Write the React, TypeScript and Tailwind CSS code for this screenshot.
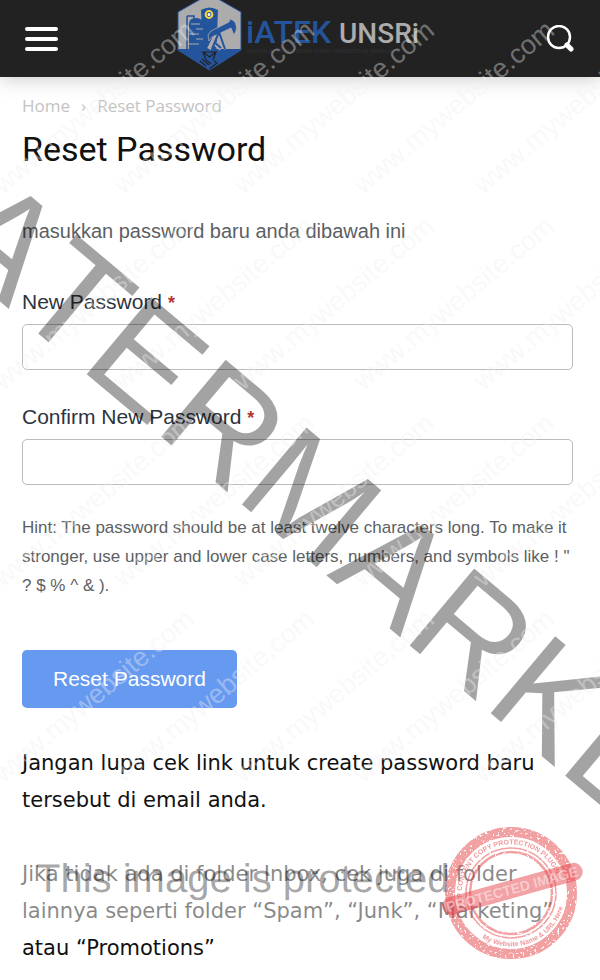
const columns = [3, 123, 243, 363, 483];
const rows = [195, 391, 588, 784];

function Logo() {
  return (
    <svg className="h-[77px] w-[256px]" viewBox="174 0 256 77" role="img" aria-label="IATEK UNSRI">
      <path d="M178 12 L209.500 -6 L241 12 V50 L209.500 70 L178 50Z" fill="#acacac" stroke="#24549c" strokeWidth="1" />
      <path d="M178 49 H241 V50 L209.500 70 L178 50Z" fill="#24549c" />
      <path d="M201 10 Q209.500 5 218 10 L216.500 49 H203Z" fill="#24549c" />
      <path d="M187 16 H194 V20 M187 16 V49" fill="none" stroke="#24549c" strokeWidth="1.500" />
      <path d="M189 49 V24 Q189 18 196 18 Q203 18 203 24 V49Z" fill="#24549c" />
      <path d="M191 24 H200 M196 29 H203 M189 34 H199 M196 39 H203 M189 44 H199" stroke="#acacac" strokeWidth="1.200" />
      <path d="M218 31 L209 49 M219 31 L226 49 M213 42 L221 49" stroke="#acacac" strokeWidth="4" />
      <path d="M208 35 L211 31 L229 22 L230 19 Q238 21 236 31 L234 35 L231 28 L212 37 L209 41Z" fill="#24549c" stroke="#acacac" strokeWidth="0.800" />
      <path d="M219 32 L212 49 M219 32 L225 49 M214 42 L221 48" stroke="#24549c" strokeWidth="2" />
      <circle cx="209" cy="14.500" r="3.400" fill="#24549c" stroke="#f1d83c" strokeWidth="2" />
      <circle cx="209" cy="14.500" r="1.500" fill="#fff" />
      <path d="M203 52 H216 L209.500 57Z M203 52 L206 60 L211 64 M216 52 L213 60 M200 61 L206 66 M202 59 L209 65 M214 61 L217 63 L209.500 69" fill="none" stroke="#222" strokeWidth="1.200" />
      <text x="246" y="43" fill="#24549c" className="font-[Roboto,sans-serif] text-[32px] font-medium">iATEK</text>
      <text x="339" y="43" fill="#acacac" className="font-[Roboto,sans-serif] text-[28px] font-medium">UNSRi</text>
      <text x="247" y="53" fill="#303238" className="font-[Roboto,sans-serif] text-[6px]">IKATAN ALUMNI TEKNIK KIMIA UNIVERSITAS SRIWIJAYA</text>
    </svg>
  );
}

function Stamp() {
  return (
    <svg className="pointer-events-none absolute left-[436px] top-[816px] h-[154px] w-[154px] [text-rendering:geometricPrecision]" viewBox="436 816 154 154" aria-label="Protected image">
      <defs>
        <filter id="grit" x="-10%" y="-10%" width="120%" height="120%">
          <feTurbulence type="fractalNoise" baseFrequency="0.400" numOctaves="2" seed="4" result="noise" />
          <feColorMatrix in="noise" type="matrix" values="0 0 0 0 0  0 0 0 0 0  0 0 0 0 0  12 0 0 0 -3.500" result="specks" />
          <feComposite in="SourceGraphic" in2="specks" operator="in" />
        </filter>
        <path id="stampTop" d="M463 904 A49 49 0 1 1 559 883" />
        <path id="stampBottom" d="M482 938 A54 54 0 0 0 565 890" />
      </defs>
      <g fill="none" stroke="#e6444a" opacity="0.500">
        <circle cx="511" cy="893" r="61" strokeWidth="10" filter="url(#grit)" />
        <circle cx="511" cy="893" r="45" strokeWidth="1.500" filter="url(#grit)" />
        <circle cx="511" cy="893" r="41" strokeWidth="2.500" filter="url(#grit)" />
      </g>
      <g fill="#e6444a" opacity="0.550" className="font-['Liberation_Sans',Arial,sans-serif] font-bold">
        <text className="text-[7px]"><textPath href="#stampTop">WP CONTENT COPY PROTECTION PLUGIN</textPath></text>
        <text className="text-[7px]"><textPath href="#stampBottom">My Website Name &amp; URL Here</textPath></text>
      </g>
      <g transform="rotate(-15.500 512 889)">
        <rect x="440" y="880" width="145" height="18" rx="9" fill="#e6444a" opacity="0.500" />
        <text x="512" y="894" textAnchor="middle" fill="#fff" opacity="0.450" className="font-['Liberation_Sans',Arial,sans-serif] text-[14px] font-bold">PROTECTED IMAGE</text>
      </g>
    </svg>
  );
}

function Watermarks() {
  return (
    <div className="pointer-events-none absolute inset-0 overflow-hidden font-['Liberation_Sans',Arial,sans-serif]">
      <div className="absolute inset-x-0 top-[849px] h-[79px] bg-white/50" />
      <svg className="absolute left-0 top-0 h-[980px] w-full [font-kerning:none] [text-rendering:geometricPrecision]">
        <text transform="translate(-171 158) rotate(40)" fill="#000" fillOpacity="0.360" className="text-[146px]">WATERMARKED</text>
        <g fill="#f0f0f0" fillOpacity="0.400" className="text-[27px]">
          {rows.map((y) =>
            columns.map((x) => (
              <text key={`${x}-${y}`} transform={`translate(${x} ${y}) rotate(-40)`}>www.mywebsite.com</text>
            )),
          )}
        </g>
        <text x="36" y="892" fill="#000" fillOpacity="0.360" className="text-[40px]">This image is protected</text>
      </svg>
      <Stamp />
    </div>
  );
}

function PasswordField({ id, label }: { id: string; label: string }) {
  return (
    <div>
      <label htmlFor={id} className="block text-[21px] leading-7 text-[#2d3440]">
        {label} <span className="text-[18px] font-bold leading-none text-[#b5392f]">*</span>
      </label>
      <input id={id} type="password" className="mt-2 block h-[46px] w-full rounded-[5px] border border-[#b9bcbf] bg-white px-3" />
    </div>
  );
}

export default function App() {
  return (
    <div className="relative min-h-screen overflow-hidden bg-white font-['Liberation_Sans',Arial,sans-serif]">
      <header className="flex h-[77px] items-center justify-between bg-[#222] pl-[25px] pr-[26px] shadow-[0_0_20px_rgba(0,0,0,0.25)]">
        <button type="button" aria-label="Menu" className="flex w-[33px] flex-col gap-[6px]">
          <span className="h-1 rounded-sm bg-white" />
          <span className="h-1 rounded-sm bg-white" />
          <span className="h-1 rounded-sm bg-white" />
        </button>
        <Logo />
        <button type="button" aria-label="Search">
          <svg width="28" height="28" viewBox="0 0 28 28" fill="none" stroke="#fff" strokeLinecap="round">
            <circle cx="13" cy="12" r="11" strokeWidth="2.500" />
            <path d="M21 20 L25 24" strokeWidth="5" />
          </svg>
        </button>
      </header>
      <main className="pl-[22px] pr-[27px]">
        <nav aria-label="Breadcrumb" className="flex items-center gap-[11px] pt-[17px] font-['Open_Sans',sans-serif] text-[17px] leading-6 text-[#c3c3c3]">
          <a href="#home">Home</a>
          <span>›</span>
          <span>Reset Password</span>
        </nav>
        <h1 className="mt-[11px] font-[Roboto,sans-serif] text-[34px] leading-10 text-[#111]">Reset Password</h1>
        <form onSubmit={(event) => event.preventDefault()}>
          <p className="mt-[48px] text-[20px] leading-7 text-[#5c5f63]">masukkan password baru anda dibawah ini</p>
          <div className="mt-[43px] flex flex-col gap-[33px]">
            <PasswordField id="new-password" label="New Password" />
            <PasswordField id="confirm-password" label="Confirm New Password" />
          </div>
          <p className="mt-[28px] text-[17px] leading-[29px] text-[#5c5f63]">
            Hint: The password should be at least twelve characters long. To make it stronger, use upper and lower case letters, numbers, and symbols like ! " ? $ % ^ &amp; ).
          </p>
          <button type="submit" className="mt-[50px] block h-[58px] rounded-[5px] bg-[#6699f0] px-[31px] text-[21px] text-white">Reset Password</button>
        </form>
        <div className="mt-[37px] font-['DejaVu_Sans',Verdana,sans-serif] text-[21px] leading-[37px] text-[#111]">
          <p>Jangan lupa cek link untuk create password baru tersebut di email anda.</p>
          <p className="mt-[37px]">Jika tidak ada di folder Inbox, cek juga di folder lainnya seperti folder “Spam”, “Junk”, “Marketing” atau “Promotions”</p>
        </div>
      </main>
      <Watermarks />
    </div>
  );
}
